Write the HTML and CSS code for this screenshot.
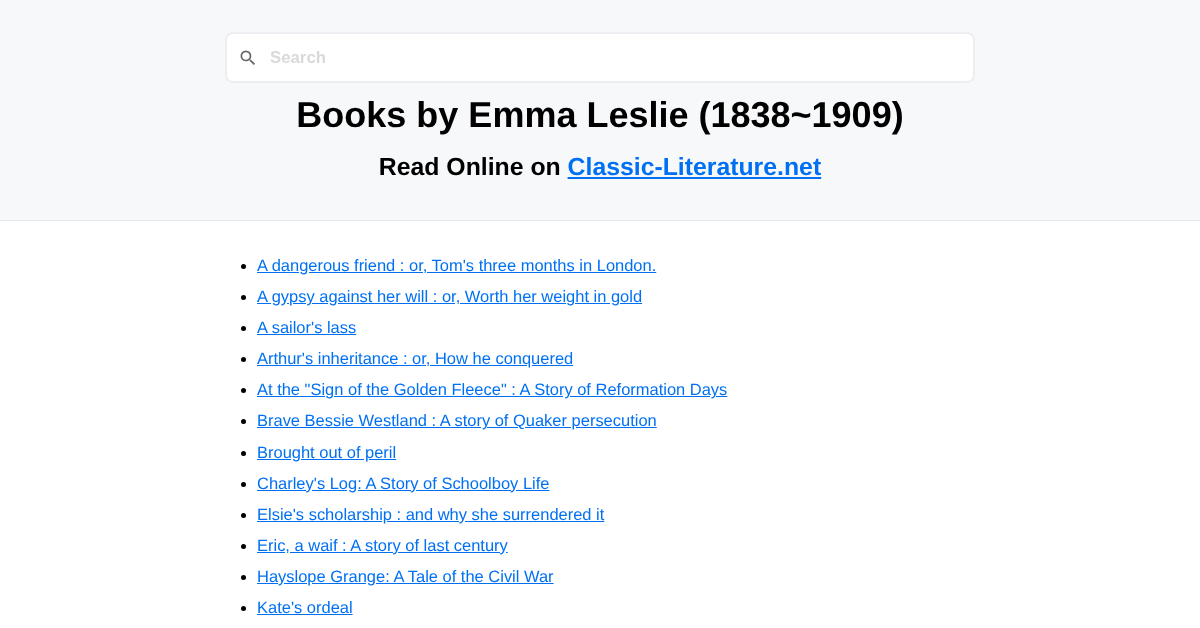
FILE: index.html
```html
<!doctype html>
<html><head><meta charset="UTF-8"><title>Books by Emma Leslie</title><link rel="stylesheet" href="styles.css"></head>
<body>
  <div class="entete">
    <div class="cadre">
      <div class="recherche">
        <svg class="loupe" width="24" height="24" viewBox="0 0 24 24"><path d="M15.5 14h-.79l-.28-.27A6.47 6.47 0 0 0 16 9.5 6.5 6.5 0 1 0 9.5 16c1.61 0 3.09-.59 4.23-1.57l.27.28v.79l5 4.99L20.49 19l-4.99-5zm-6 0C7.01 14 5 11.99 5 9.5S7.01 5 9.5 5 14 7.01 14 9.5 11.99 14 9.5 14z"/></svg>
        <input type="text" placeholder="Search">
      </div>
      <h1>Books by Emma Leslie (1838~1909)</h1>
      <h2>Read Online on <a href="#">Classic-Literature.net</a></h2>
    </div>
  </div>
  <div class="cadre">
    <ul class="livres">
      <li><a href="#">A dangerous friend : or, Tom's three months in London.</a></li>
      <li><a href="#">A gypsy against her will : or, Worth her weight in gold</a></li>
      <li><a href="#">A sailor's lass</a></li>
      <li><a href="#">Arthur's inheritance : or, How he conquered</a></li>
      <li><a href="#">At the "Sign of the Golden Fleece" : A Story of Reformation Days</a></li>
      <li><a href="#">Brave Bessie Westland : A story of Quaker persecution</a></li>
      <li><a href="#">Brought out of peril</a></li>
      <li><a href="#">Charley's Log: A Story of Schoolboy Life</a></li>
      <li><a href="#">Elsie's scholarship : and why she surrendered it</a></li>
      <li><a href="#">Eric, a waif : A story of last century</a></li>
      <li><a href="#">Hayslope Grange: A Tale of the Civil War</a></li>
      <li><a href="#">Kate's ordeal</a></li>
    </ul>
  </div>
</body></html>
```
FILE: styles.css
```css
* {box-sizing: border-box;}
html, body {margin:0;height:628px;overflow:hidden;}
body {font-family:"Liberation Sans",Arial,sans-serif;background:#fff;color:#000;text-rendering:geometricPrecision;}
a {color:#0070f3;}
.cadre {width:750px;margin:0 auto;will-change:transform;}
.entete {background:#f7f8fa;border-bottom:1px solid #e5e7eb;padding:32px 0 24px;height:221px;}
.recherche {display:flex;align-items:center;height:51px;background:#fff;border:2px solid #eceef1;border-radius:8px;padding:0 11px;}
.loupe {width:20px;height:20px;fill:#666;flex:none;}
.recherche input {flex:1;border:0;outline:0;background:none;margin-left:12px;padding:0;font:bold 16.8px "Liberation Sans",Arial,sans-serif;}
.recherche input::placeholder {color:#d9d9d9;opacity:1;}
h1 {margin:8px 0 0;text-align:center;font-size:36px;line-height:48px;font-weight:bold;}
h2 {margin:11px 0 0;text-align:center;font-size:24.8px;line-height:36px;font-weight:bold;}
.livres {margin:30.4px 0 0;padding:0 0 0 32px;font-size:16.48px;line-height:31.1px;}
```
